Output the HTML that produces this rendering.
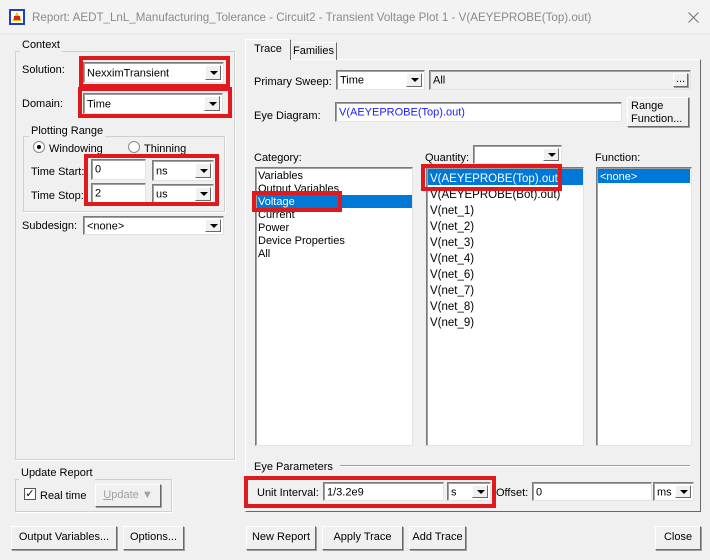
<!DOCTYPE html>
<html><head><style>
*{box-sizing:border-box;margin:0;padding:0}
body{width:710px;height:560px;background:#f0f0f0;font-family:"Liberation Sans",sans-serif;font-size:11px;color:#000;position:relative;overflow:hidden}
.a{position:absolute;white-space:nowrap}
.t{position:absolute;white-space:nowrap;line-height:14px;margin-top:1px}
.box{position:absolute;background:#fff;border:1px solid #7a7a7a;border-right-color:#e3e3e3;border-bottom-color:#e3e3e3;box-shadow:inset 1px 1px 0 #a0a0a0}
.grp{position:absolute;border:1px solid #d0d0d0;box-shadow:1px 1px 0 #fff}
.lg{position:absolute;background:#f0f0f0;padding:0 2px;line-height:14px}
.dd{position:absolute;top:2px;right:2px;bottom:2px;width:16px;background:#f0f0f0;border:1px solid #fff;border-right-color:#696969;border-bottom-color:#696969}
.dd:after{content:"";position:absolute;left:4px;top:50%;margin-top:-2px;border-left:4px solid transparent;border-right:4px solid transparent;border-top:4px solid #000}
.btn{position:absolute;white-space:nowrap;background:#f0f0f0;border:1px solid #fff;border-right-color:#696969;border-bottom-color:#696969;box-shadow:1px 1px 0 #a0a0a0;text-align:center;line-height:21px;font-size:11px}
.red{position:absolute;border:4px solid #e0191e}
.sel{position:absolute;background:#0078d7;color:#fff}
.tx{position:absolute;left:3px;top:50%;transform:translateY(-45%)}
</style></head><body>
<div class="a" style="left:0;top:0;width:710px;height:34px;background:#f3f3f3;border-bottom:1px solid #e8e8e8"></div>
<svg class="a" style="left:9px;top:9px" width="16" height="16"><rect x="0" y="0" width="16" height="16" fill="#1d3fc0"/><rect x="2" y="2" width="12" height="12" fill="#fff"/><polygon points="3,12 8,3 13,12" fill="#f5c000"/><rect x="5" y="7" width="6" height="4" fill="#e02020"/></svg>
<div class="t" style="left:32px;top:10px;color:#8a8a8a;font-size:11.6px">Report: AEDT_LnL_Manufacturing_Tolerance - Circuit2 - Transient Voltage Plot 1 - V(AEYEPROBE(Top).out)</div>
<svg class="a" style="left:688px;top:12px" width="11" height="11"><path d="M0.5 0.5L10.5 10.5M10.5 0.5L0.5 10.5" stroke="#777" stroke-width="1.1"/></svg>

<div class="grp" style="left:15px;top:51px;width:220px;height:409px"></div>
<div class="lg" style="left:20px;top:38px">Context</div>
<div class="t" style="left:22px;top:62px">Solution:</div>
<div class="box" style="left:83px;top:62px;width:141px;height:21px"><span class="tx">NexximTransient</span><div class="dd"></div></div>
<div class="red" style="left:79px;top:56px;width:151px;height:32px"></div>
<div class="t" style="left:22px;top:96px">Domain:</div>
<div class="box" style="left:83px;top:93px;width:140px;height:21px"><span class="tx">Time</span><div class="dd"></div></div>
<div class="red" style="left:78px;top:87px;width:154px;height:31px"></div>
<div class="grp" style="left:23px;top:136px;width:202px;height:76px"></div>
<div class="lg" style="left:29px;top:124px">Plotting Range</div>
<div class="a" style="left:33px;top:141px;width:12px;height:12px;border-radius:50%;background:#fff;border:1px solid #888"><div class="a" style="left:3px;top:3px;width:4px;height:4px;border-radius:50%;background:#000"></div></div>
<div class="t" style="left:49px;top:141px">Windowing</div>
<div class="a" style="left:128px;top:141px;width:12px;height:12px;border-radius:50%;background:#fff;border:1px solid #888"></div>
<div class="t" style="left:144px;top:141px">Thinning</div>
<div class="t" style="left:31px;top:164px">Time Start:</div>
<div class="t" style="left:31px;top:188px">Time Stop:</div>
<div class="box" style="left:91px;top:159px;width:55px;height:21px"><span class="tx" style="top:9px">0</span></div>
<div class="box" style="left:91px;top:183px;width:55px;height:21px"><span class="tx" style="top:9px">2</span></div>
<div class="box" style="left:152px;top:160px;width:62px;height:21px"><span class="tx">ns</span><div class="dd"></div></div>
<div class="box" style="left:152px;top:184px;width:62px;height:20px"><span class="tx">us</span><div class="dd"></div></div>
<div class="red" style="left:84px;top:154px;width:135px;height:52px"></div>
<div class="t" style="left:22px;top:218px">Subdesign:</div>
<div class="box" style="left:83px;top:216px;width:141px;height:19px"><span class="tx">&lt;none&gt;</span><div class="dd"></div></div>

<div class="grp" style="left:15px;top:479px;width:157px;height:33px"></div>
<div class="lg" style="left:19px;top:466px">Update Report</div>
<div class="a" style="left:24px;top:488px;width:12px;height:12px;background:#fff;border:1px solid #555;font-size:11px;line-height:10px;text-align:center">✓</div>
<div class="t" style="left:40px;top:488px">Real time</div>
<div class="btn" style="left:95px;top:484px;width:66px;height:23px;color:#a0a0a0"><u>U</u>pdate ▼</div>

<div class="btn" style="left:11px;top:526px;width:106px;height:24px">Output Variables...</div>
<div class="btn" style="left:123px;top:526px;width:61px;height:24px">Options...</div>
<div class="btn" style="left:246px;top:526px;width:70px;height:24px">New Report</div>
<div class="btn" style="left:322px;top:526px;width:81px;height:24px">Apply Trace</div>
<div class="btn" style="left:409px;top:526px;width:57px;height:24px">Add Trace</div>
<div class="btn" style="left:655px;top:526px;width:46px;height:24px">Close</div>

<div class="a" style="left:245px;top:59px;width:456px;height:453px;border:1px solid #fff;border-right-color:#696969;border-bottom-color:#696969"></div>
<div class="a" style="left:290px;top:42px;width:47px;height:18px;border:1px solid #fff;border-right-color:#696969;border-bottom:none;text-align:center;line-height:17px">Families</div>
<div class="a" style="left:245px;top:39px;width:46px;height:21px;border:1px solid #fff;border-right-color:#696969;border-bottom:none;background:#f0f0f0;text-align:center;line-height:19px">Trace</div>

<div class="t" style="left:254px;top:74px">Primary Sweep:</div>
<div class="box" style="left:336px;top:70px;width:89px;height:20px"><span class="tx">Time</span><div class="dd"></div></div>
<div class="box" style="left:429px;top:70px;width:262px;height:20px;background:#f0f0f0"><span class="tx">All</span><div class="btn" style="right:2px;left:auto;top:2px;width:15px;height:14px;line-height:10px;font-size:11px">...</div></div>
<div class="t" style="left:254px;top:108px">Eye Diagram:</div>
<div class="box" style="left:335px;top:102px;width:287px;height:20px"><span class="tx" style="color:#1a1aff">V(AEYEPROBE(Top).out)</span></div>
<div class="btn" style="left:627px;top:97px;width:62px;height:30px;line-height:13px;text-align:left;padding:2px 0 0 3px">Range<br>Function...</div>

<div class="t" style="left:254px;top:150px">Category:</div>
<div class="t" style="left:425px;top:150px">Quantity:</div>
<div class="box" style="left:473px;top:145px;width:89px;height:19px"><div class="dd"></div></div>
<div class="t" style="left:595px;top:150px">Function:</div>

<div class="box" style="left:255px;top:167px;width:158px;height:279px"></div>
<div class="sel" style="left:257px;top:195px;width:155px;height:13px"></div>
<div class="t" style="left:258px;top:169px;line-height:13px">Variables<br>Output Variables<br><span style="color:#fff">Voltage</span><br>Current<br>Power<br>Device Properties<br>All</div>
<div class="red" style="left:252px;top:191px;width:90px;height:21px"></div>

<div class="box" style="left:426px;top:167px;width:158px;height:279px"></div>
<div class="sel" style="left:428px;top:169px;width:155px;height:16px"></div>
<div class="t" style="left:430px;top:170px;line-height:16px;font-size:11.5px"><span style="color:#fff">V(AEYEPROBE(Top).out)</span><br>V(AEYEPROBE(Bot).out)<br>V(net_1)<br>V(net_2)<br>V(net_3)<br>V(net_4)<br>V(net_6)<br>V(net_7)<br>V(net_8)<br>V(net_9)</div>
<div class="red" style="left:421px;top:164px;width:141px;height:27px"></div>

<div class="box" style="left:596px;top:167px;width:96px;height:279px"></div>
<div class="sel" style="left:598px;top:169px;width:92px;height:14px"></div>
<div class="t" style="left:600px;top:169px;color:#fff">&lt;none&gt;</div>

<div class="t" style="left:254px;top:459px">Eye Parameters</div>
<div class="a" style="left:340px;top:465px;width:350px;height:2px;border-top:1px solid #a0a0a0;border-bottom:1px solid #fff"></div>
<div class="t" style="left:257px;top:485px">Unit Interval:</div>
<div class="box" style="left:323px;top:482px;width:121px;height:19px"><span class="tx">1/3.2e9</span></div>
<div class="box" style="left:447px;top:482px;width:44px;height:19px"><span class="tx">s</span><div class="dd"></div></div>
<div class="red" style="left:244px;top:476px;width:252px;height:32px"></div>
<div class="t" style="left:496px;top:485px">Offset:</div>
<div class="box" style="left:532px;top:482px;width:120px;height:19px"><span class="tx">0</span></div>
<div class="box" style="left:653px;top:482px;width:41px;height:19px"><span class="tx">ms</span><div class="dd"></div></div>
</body></html>
